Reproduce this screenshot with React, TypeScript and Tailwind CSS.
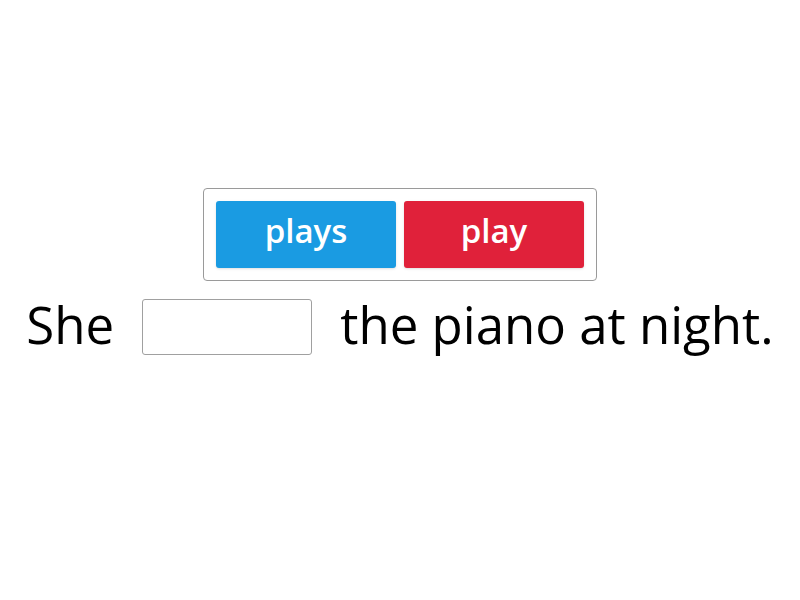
export default function App() {
  const options = [
    { label: 'plays', color: 'bg-[#1a9be2]' },
    { label: 'play', color: 'bg-[#e0213a]' },
  ]

  return (
    <div className="w-[800px] h-[600px] bg-white flex flex-col items-center pt-[188px] font-['Open_Sans',sans-serif]">
      {/* Options */}
      <div className="flex gap-2 p-3 border border-[#9a9a9a] rounded-[4px]">
        {options.map(opt => (
          <div
            key={opt.label}
            className={`w-[180px] h-[67px] rounded-[3px] flex items-center justify-center pb-[7px] text-white font-semibold text-[33px] shadow-sm ${opt.color}`}
          >
            {opt.label}
          </div>
        ))}
      </div>

      {/* Sentence */}
      <div className="flex items-center gap-7 mt-[18px] text-[51px] text-black leading-none">
        <span className="mb-[5px]">She</span>
        <div className="w-[170px] h-[56px] border border-[#a0a0a0] rounded-[3px]" />
        <span className="mb-[5px]">the piano at night.</span>
      </div>
    </div>
  )
}
